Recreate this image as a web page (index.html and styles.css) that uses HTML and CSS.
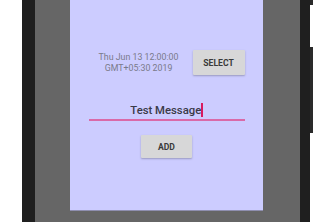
FILE: index.html
```html
<!DOCTYPE html>
<html lang="en">
<head>
    <meta charset="UTF-8">
    <meta name="viewport" content="width=device-width, initial-scale=1.0">
    <title>Reminder</title>
    <link rel="stylesheet" href="styles.css">
</head>
<body>
    <div class="phone">
        <div class="bezel">
            <div class="screen">
                <div class="date-row">
                    <div class="date-text">Thu Jun 13 12:00:00<br>GMT+05:30 2019</div>
                    <button class="btn btn-select">SELECT</button>
                </div>

                <div class="message">
                    <span class="message-text">Test Message</span><span class="cursor"></span>
                </div>

                <button class="btn btn-add">ADD</button>
            </div>
        </div>
        <div class="side-key side-key-top"></div>
        <div class="side-key side-key-mid"></div>
    </div>
</body>
</html>
```

FILE: styles.css
```css
body {
    margin: 0;
    padding: 0;
    background-color: #fff;
    font-family: Roboto, "Liberation Sans", sans-serif;
    overflow: hidden;
}

.phone {
    position: relative;
    width: 288px;
    height: 222px;
    margin-left: 22px;
}

.bezel {
    height: 222px;
    background-color: #666;
    border-left: 13px solid #1f1f1f;
    border-right: 10px solid #1f1f1f;
    padding-left: 35px;
}

.screen {
    width: 193px;
    height: 210px;
    background-color: #ccccff;
    display: flex;
    flex-direction: column;
    align-items: center;
    box-shadow: 0 1px 0 #8f8fb0;
}

.date-row {
    display: flex;
    align-items: center;
    width: 156px;
    margin-top: 50px;
}

.date-text {
    flex: 1;
    text-align: center;
    font-size: 8.8px;
    line-height: 11px;
    color: #7a7a8a;
    padding-right: 4px;
}

.btn {
    font-family: Roboto, "Liberation Sans", sans-serif;
    font-weight: 700;
    font-size: 8.6px;
    color: #3a3a3a;
    background-color: #d7d7d8;
    border: none;
    border-radius: 1px;
    padding: 0;
    box-shadow: 0 1px 2px rgba(0, 0, 0, 0.25);
}

.btn-select {
    width: 52px;
    height: 25px;
}

.message {
    width: 156px;
    margin-top: 28px;
    height: 18px;
    border-bottom: 2px solid #d96aa8;
    display: flex;
    justify-content: center;
    align-items: flex-end;
    padding-bottom: 2px;
    box-sizing: border-box;
}

.message-text {
    font-size: 11.3px;
    font-weight: 500;
    color: #3a3a48;
    line-height: 13px;
}

.cursor {
    width: 1.5px;
    height: 14px;
    background-color: #d81b60;
}

.btn-add {
    width: 51px;
    height: 23px;
    margin-top: 14px;
}

.side-key {
    position: absolute;
    right: -3px;
    width: 3px;
    background-color: #2a2a2a;
}

.side-key-top {
    top: 0;
    height: 5px;
}

.side-key-mid {
    top: 47px;
    height: 86px;
}
```
